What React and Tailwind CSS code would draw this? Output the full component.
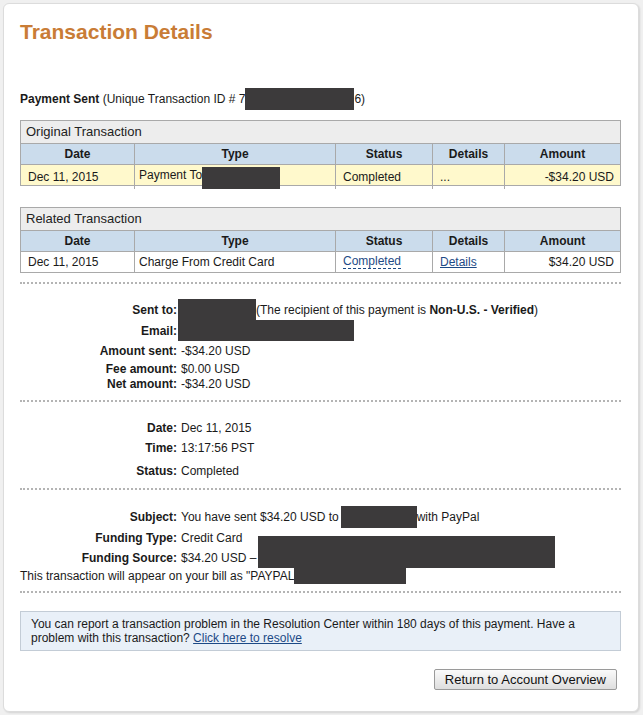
import React from "react";

const Redact = ({ className = "" }) => (
  <span className={`inline-block shrink-0 bg-[#3c3a3b] ${className}`} />
);

const Dotted = ({ className = "" }) => (
  <div className={`border-t-2 border-dotted border-[#b4b4b4] ${className}`} />
);

const cols = "grid grid-cols-[114px_201px_97px_72px_1fr]";

function TxTable({ title, yellow, children }) {
  return (
    <div className="border border-[#a9a9a9]">
      <div className="h-[23px] flex items-center pl-[5px] bg-[#ededed] border-b border-[#a9a9a9] text-[13px] text-[#222]">
        {title}
      </div>
      <div className={`${cols} h-[21px] bg-[#cbdcec] border-b border-[#a9a9a9] font-bold text-center`}>
        {["Date", "Type", "Status", "Details", "Amount"].map((h, i) => (
          <div key={h} className={`flex items-center justify-center ${i < 4 ? "border-r border-[#a9a9a9]" : ""}`}>
            {h}
          </div>
        ))}
      </div>
      <div className={`${cols} h-[20px] ${yellow ? "bg-[#fff9cc]" : "bg-white"}`}>{children}</div>
    </div>
  );
}

function Row({ label, h, children, className = "" }) {
  return (
    <div className={`flex items-center ${h} ${className}`}>
      <div className="w-[157px] shrink-0 text-right font-bold">{label}</div>
      <div className="ml-[4px] flex items-center whitespace-nowrap">{children}</div>
    </div>
  );
}

export default function App() {
  return (
    <div className="min-h-screen bg-[#f0f0f0] pt-[3px] pl-[3px] font-['Liberation_Sans',Arial,sans-serif] text-[12px] leading-[14px] text-[#1a1a1a]">
      <div className="w-[636px] bg-white border border-[#dcdcdc] rounded-[6px] shadow-[1px_1px_2px_rgba(0,0,0,0.12)] pt-[16px] pl-[16px] pr-[17px] pb-[21px]">
        <h1 className="text-[21px] leading-[24px] font-bold text-[#c97c36]">Transaction Details</h1>

        <div className="mt-[48px] flex items-center h-[14px] whitespace-nowrap">
          <span className="font-bold">Payment Sent</span>
          <span>&nbsp;(Unique Transaction ID # 7</span>
          <Redact className="w-[109px] h-[22px]" />
          <span>6)</span>
        </div>

        <div className="mt-[14px]">
          <TxTable title="Original Transaction" yellow>
            <div className="border-r border-[#a9a9a9] flex items-center pl-[7px]">Dec 11, 2015</div>
            <div className="border-r border-[#a9a9a9] flex items-start pl-[4px]">
              <span className="mt-[3px]">Payment To</span>
              <Redact className="w-[78px] h-[22px] mt-[2px]" />
            </div>
            <div className="border-r border-[#a9a9a9] flex items-center pl-[7px]">Completed</div>
            <div className="border-r border-[#a9a9a9] flex items-center pl-[7px]">...</div>
            <div className="flex items-center justify-end pr-[6px]">-$34.20 USD</div>
          </TxTable>
        </div>

        <div className="mt-[21px]">
          <TxTable title="Related Transaction">
            <div className="border-r border-[#a9a9a9] flex items-center pl-[7px]">Dec 11, 2015</div>
            <div className="border-r border-[#a9a9a9] flex items-center pl-[4px]">Charge From Credit Card</div>
            <div className="border-r border-[#a9a9a9] flex items-center pl-[7px]">
              <span className="text-[#1d4a86] border-b border-dashed border-[#1d4a86] leading-[13px]">Completed</span>
            </div>
            <div className="border-r border-[#a9a9a9] flex items-center pl-[7px]">
              <a className="text-[#1d4a86] underline">Details</a>
            </div>
            <div className="flex items-center justify-end pr-[6px]">$34.20 USD</div>
          </TxTable>
        </div>

        <Dotted className="mt-[9px]" />

        <div className="pt-[15px]">
          <Row label="Sent to:" h="h-[21px]">
            <Redact className="w-[78px] h-[22px] -ml-[3px]" />
            <span>
              (The recipient of this payment is <b>Non-U.S. - Verified</b>)
            </span>
          </Row>
          <Row label="Email:" h="h-[21px]">
            <Redact className="w-[176px] h-[21px] -ml-[3px]" />
          </Row>
          <Row label="Amount sent:" h="h-[20px]">-$34.20 USD</Row>
          <Row label="Fee amount:" h="h-[15px]">$0.00 USD</Row>
          <Row label="Net amount:" h="h-[15px]">-$34.20 USD</Row>
        </div>

        <Dotted className="mt-[9px]" />

        <div className="pt-[16px]">
          <Row label="Date:" h="h-[20px]">Dec 11, 2015</Row>
          <Row label="Time:" h="h-[20px]">13:17:56 PST</Row>
          <Row label="Status:" h="h-[20px]" className="mt-[3px]">Completed</Row>
        </div>

        <Dotted className="mt-[7px]" />

        <div className="pt-[16px]">
          <Row label="Subject:" h="h-[22px]">
            You have sent $34.20 USD to
            <Redact className="w-[76px] h-[22px] ml-[2px]" />
            with PayPal
          </Row>
          <Row label="Funding Type:" h="h-[20px]">Credit Card</Row>
          <div className="flex items-start h-[20px]">
            <div className="w-[157px] shrink-0 text-right font-bold mt-[3px]">Funding Source:</div>
            <div className="ml-[4px] mt-[3px] whitespace-nowrap">$34.20 USD –</div>
            <Redact className="w-[297px] h-[32px] -mt-[12px] ml-[2px]" />
          </div>
          <div className="flex items-center h-[16px] whitespace-nowrap">
            This transaction will appear on your bill as "PAYPAL
            <Redact className="w-[112px] h-[16px]" />
          </div>
        </div>

        <Dotted className="mt-[7px]" />

        <div className="mt-[18px] border border-[#c3ccd6] bg-[#e9f0f8] px-[10px] py-[5px] text-[#1a1a1a]">
          You can report a transaction problem in the Resolution Center within 180 days of this payment. Have a
          problem with this transaction?{" "}
          <a className="text-[#1d4a86] underline">Click here to resolve</a>
        </div>

        <div className="mt-[18px] flex justify-end pr-[4px]">
          <button className="h-[21px] px-[10px] border border-[#9a9a9a] rounded-[2px] bg-gradient-to-b from-[#fafafa] to-[#dedede] text-[13px] leading-[15px] text-[#111]">
            Return to Account Overview
          </button>
        </div>
      </div>
    </div>
  );
}
